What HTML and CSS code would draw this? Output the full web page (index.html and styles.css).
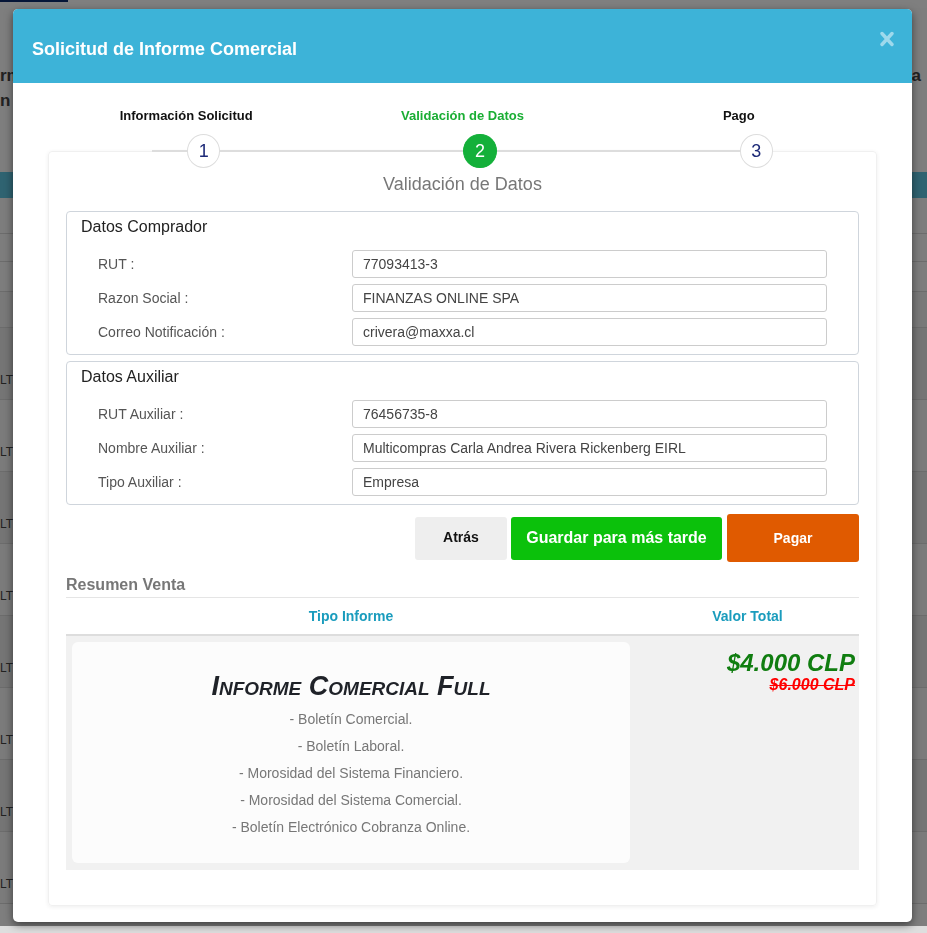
FILE: index.html
```html
<!DOCTYPE html>
<html lang="es">
<head>
    <meta charset="UTF-8">
    <meta name="viewport" content="width=device-width, initial-scale=1.0">
    <title>Solicitud de Informe Comercial</title>
    <link rel="stylesheet" href="styles.css">
</head>
<body>
    <div class="page">
        <div class="topbar"><span class="brand-line"></span></div>
        <div class="page-head">
            <div class="head-line"><span>rm</span><span>para</span></div>
            <div class="head-line"><span>n</span></div>
        </div>
        <div class="page-table">
            <div class="t-head"></div>
            <div class="t-row r1"></div>
            <div class="t-row r2"></div>
            <div class="t-row r3"></div>
            <div class="t-row r4"></div>
            <div class="t-row big dark">LTDA</div>
            <div class="t-row big">LTDA</div>
            <div class="t-row big dark">LTDA</div>
            <div class="t-row big">LTDA</div>
            <div class="t-row big dark">LTDA</div>
            <div class="t-row big">LTDA</div>
            <div class="t-row big dark">LTDA</div>
            <div class="t-row big">LTDA</div>
        </div>
    </div>

    <div class="backdrop"></div>
    <div class="scrollbar"></div>

    <div class="modal">
        <div class="modal-header">
            <h4>Solicitud de Informe Comercial</h4>
            <button class="close" aria-label="Cerrar">
                <svg width="14" height="16" viewBox="0 0 14 16">
                    <path d="M2 2.5 L12 13.5 M12 2.5 L2 13.5" stroke="currentColor" stroke-width="3.4" stroke-linecap="round"/>
                </svg>
            </button>
        </div>

        <div class="modal-body">
            <div class="stepper">
                <div class="step-labels">
                    <span>Información Solicitud</span>
                    <span class="active">Validación de Datos</span>
                    <span>Pago</span>
                </div>
                <div class="step-track">
                    <span class="step-dot">1</span>
                    <span class="step-dot active">2</span>
                    <span class="step-dot">3</span>
                </div>
            </div>

            <div class="panel">
                <h3 class="panel-title">Validación de Datos</h3>

                <div class="group">
                    <h4>Datos Comprador</h4>
                    <div class="field"><label>RUT :</label><input type="text" value="77093413-3" readonly></div>
                    <div class="field"><label>Razon Social :</label><input type="text" value="FINANZAS ONLINE SPA" readonly></div>
                    <div class="field"><label>Correo Notificación :</label><input type="text" value="crivera@maxxa.cl" readonly></div>
                </div>

                <div class="group">
                    <h4>Datos Auxiliar</h4>
                    <div class="field"><label>RUT Auxiliar :</label><input type="text" value="76456735-8" readonly></div>
                    <div class="field"><label>Nombre Auxiliar :</label><input type="text" value="Multicompras Carla Andrea Rivera Rickenberg EIRL" readonly></div>
                    <div class="field"><label>Tipo Auxiliar :</label><input type="text" value="Empresa" readonly></div>
                </div>

                <div class="actions">
                    <button class="btn btn-back">Atrás</button>
                    <button class="btn btn-save">Guardar para más tarde</button>
                    <button class="btn btn-pay">Pagar</button>
                </div>

                <h5 class="summary-title">Resumen Venta</h5>
                <div class="summary">
                    <div class="summary-head">
                        <span>Tipo Informe</span>
                        <span>Valor Total</span>
                    </div>
                    <div class="summary-row">
                        <div class="product">
                            <h2>Informe Comercial Full</h2>
                            <p>- Boletín Comercial.</p>
                            <p>- Boletín Laboral.</p>
                            <p>- Morosidad del Sistema Financiero.</p>
                            <p>- Morosidad del Sistema Comercial.</p>
                            <p>- Boletín Electrónico Cobranza Online.</p>
                        </div>
                        <div class="price">
                            <span class="price-now">$4.000 CLP</span>
                            <span class="price-old">$6.000 CLP</span>
                        </div>
                    </div>
                </div>
            </div>
        </div>
    </div>
</body>
</html>
```

FILE: styles.css
```css
body {
    margin: 0;
    font-family: "Liberation Sans", Arial, sans-serif;
    background-color: #fcfcfc;
    color: #333;
    overflow: hidden;
}

/* page behind the modal */
.page {
    height: 933px;
}

.topbar {
    height: 8px;
    background: #ffffff;
}

.brand-line {
    display: block;
    width: 68px;
    height: 2px;
    background: #0b2a6e;
}

.page-head {
    height: 164px;
    padding-top: 55px;
    box-sizing: border-box;
    font-size: 17px;
    font-weight: bold;
    color: #444;
}

.head-line {
    display: flex;
    justify-content: space-between;
    margin-right: 6px;
    line-height: 25px;
}

.t-head {
    height: 26px;
    background: #5ec6e2;
}

.t-row {
    border-bottom: 1px solid #d8d8d8;
    background: #fafafa;
    font-size: 12px;
    color: #444;
}

.r1 { height: 35px; }
.r2 { height: 27px; }
.r3 { height: 29px; }
.r4 { height: 35px; background: #f2f2f2; }

.t-row.big {
    height: 71px;
    line-height: 104px;
    background: #f6f6f6;
}

.t-row.big.dark {
    background: #ebebeb;
}

.backdrop {
    position: fixed;
    top: 0;
    left: 0;
    right: 0;
    bottom: 0;
    background: rgba(0, 0, 0, 0.5);
}

.scrollbar {
    position: fixed;
    left: 0;
    right: 0;
    bottom: 0;
    height: 7px;
    background: #dedede;
}

/* modal */
.modal {
    position: fixed;
    top: 9px;
    left: 13px;
    width: 899px;
    height: 913px;
    background: #fff;
    border-radius: 5px;
    box-shadow: 0 3px 9px rgba(0, 0, 0, 0.5);
    overflow: hidden;
}

.modal-header {
    height: 74px;
    box-sizing: border-box;
    background: #3db3d8;
    display: flex;
    justify-content: space-between;
    align-items: flex-start;
    padding: 22px 18px 0 19px;
}

.modal-header h4 {
    margin: 7px 0 0;
    font-size: 18px;
    line-height: 22px;
    color: #fff;
}

.close {
    border: none;
    background: none;
    padding: 0;
    color: rgba(255, 255, 255, 0.5);
    cursor: pointer;
}

.modal-body {
    padding: 24px 35px 17px;
}

/* stepper */
.stepper {
    position: relative;
    z-index: 1;
}

.step-labels {
    display: grid;
    grid-template-columns: 1fr 1fr 1fr;
    text-align: center;
    font-size: 13px;
    font-weight: bold;
    line-height: 18px;
    color: #111;
}

.step-labels .active {
    color: #1aae34;
}

.step-track {
    display: flex;
    gap: 243px;
    margin: 9px 104px 0 104px;
    padding-left: 35px;
    background: linear-gradient(#ddd, #ddd) 0 16px / 100% 2px no-repeat;
}

.step-dot {
    width: 32px;
    height: 32px;
    border: 1px solid #ddd;
    border-radius: 50%;
    background: #fff;
    display: flex;
    align-items: center;
    justify-content: center;
    font-size: 18px;
    color: #1d2a78;
}

.step-dot.active {
    background: #14b03a;
    border-color: #14b03a;
    color: #fff;
}

/* content panel */
.panel {
    margin-top: -17px;
    border: 1px solid #f0f0f0;
    border-radius: 4px;
    box-shadow: 0 1px 4px rgba(0, 0, 0, 0.07);
    padding: 21px 17px 35px;
}

.panel-title {
    margin: 0 0 16px;
    text-align: center;
    font-size: 18px;
    font-weight: normal;
    line-height: 22px;
    color: #777;
}

.group {
    border: 1px solid #cfd5dc;
    border-radius: 4px;
    padding: 5px 31px 8px 14px;
    margin-bottom: 6px;
}

.group h4 {
    margin: 0 0 13px;
    font-size: 16px;
    font-weight: normal;
    line-height: 20px;
    color: #222;
}

.field {
    display: flex;
    align-items: center;
    padding-left: 17px;
    margin-top: 6px;
}

.field label {
    width: 254px;
    font-size: 14px;
    color: #555;
}

.field input {
    flex: 1;
    height: 28px;
    box-sizing: border-box;
    border: 1px solid #ccc;
    border-radius: 3px;
    padding: 0 10px;
    font-family: inherit;
    font-size: 14px;
    color: #444;
    background: #fff;
}

/* buttons */
.actions {
    display: flex;
    justify-content: flex-end;
    align-items: center;
    gap: 4px;
    margin-top: 9px;
}

.btn {
    border: none;
    border-radius: 3px;
    font-family: inherit;
    font-weight: bold;
    cursor: pointer;
}

.btn-back {
    width: 92px;
    height: 43px;
    background: #eee;
    font-size: 14px;
    color: #111;
    padding-bottom: 4px;
}

.btn-save {
    width: 211px;
    height: 43px;
    background: #0bc10b;
    font-size: 16px;
    color: #fff;
}

.btn-pay {
    width: 132px;
    height: 48px;
    margin-left: 1px;
    background: #e05a00;
    font-size: 14px;
    color: #fff;
    padding-bottom: 2px;
}

/* sales summary */
.summary-title {
    margin: 14px 0 0;
    padding-bottom: 3px;
    border-bottom: 1px solid #e5e5e5;
    font-size: 16px;
    line-height: 18px;
    color: #777;
}

.summary-head {
    display: grid;
    grid-template-columns: 570px 1fr;
    height: 36px;
    align-items: center;
    text-align: center;
    border-bottom: 2px solid #ddd;
    font-size: 14px;
    font-weight: bold;
    color: #1a9cbd;
}

.summary-row {
    display: grid;
    grid-template-columns: 570px 1fr;
    background: #f1f1f1;
    padding: 6px 0 7px;
}

.product {
    margin-left: 6px;
    margin-right: 6px;
    background: #fcfcfc;
    border-radius: 6px;
    padding: 29px 0 22px;
    text-align: center;
}

.product h2 {
    margin: 0 0 5px;
    font-size: 27px;
    line-height: 30px;
    font-style: italic;
    font-variant: small-caps;
    color: #1f2228;
}

.product p {
    margin: 0;
    font-size: 14px;
    line-height: 27px;
    color: #777;
}

.price {
    display: flex;
    flex-direction: column;
    align-items: flex-end;
    padding: 7px 4px 0 0;
    font-style: italic;
    font-weight: bold;
}

.price-now {
    font-size: 24px;
    line-height: 28px;
    color: #107d10;
}

.price-old {
    font-size: 16px;
    line-height: 16px;
    color: #ff0000;
    text-decoration: line-through;
}
```
